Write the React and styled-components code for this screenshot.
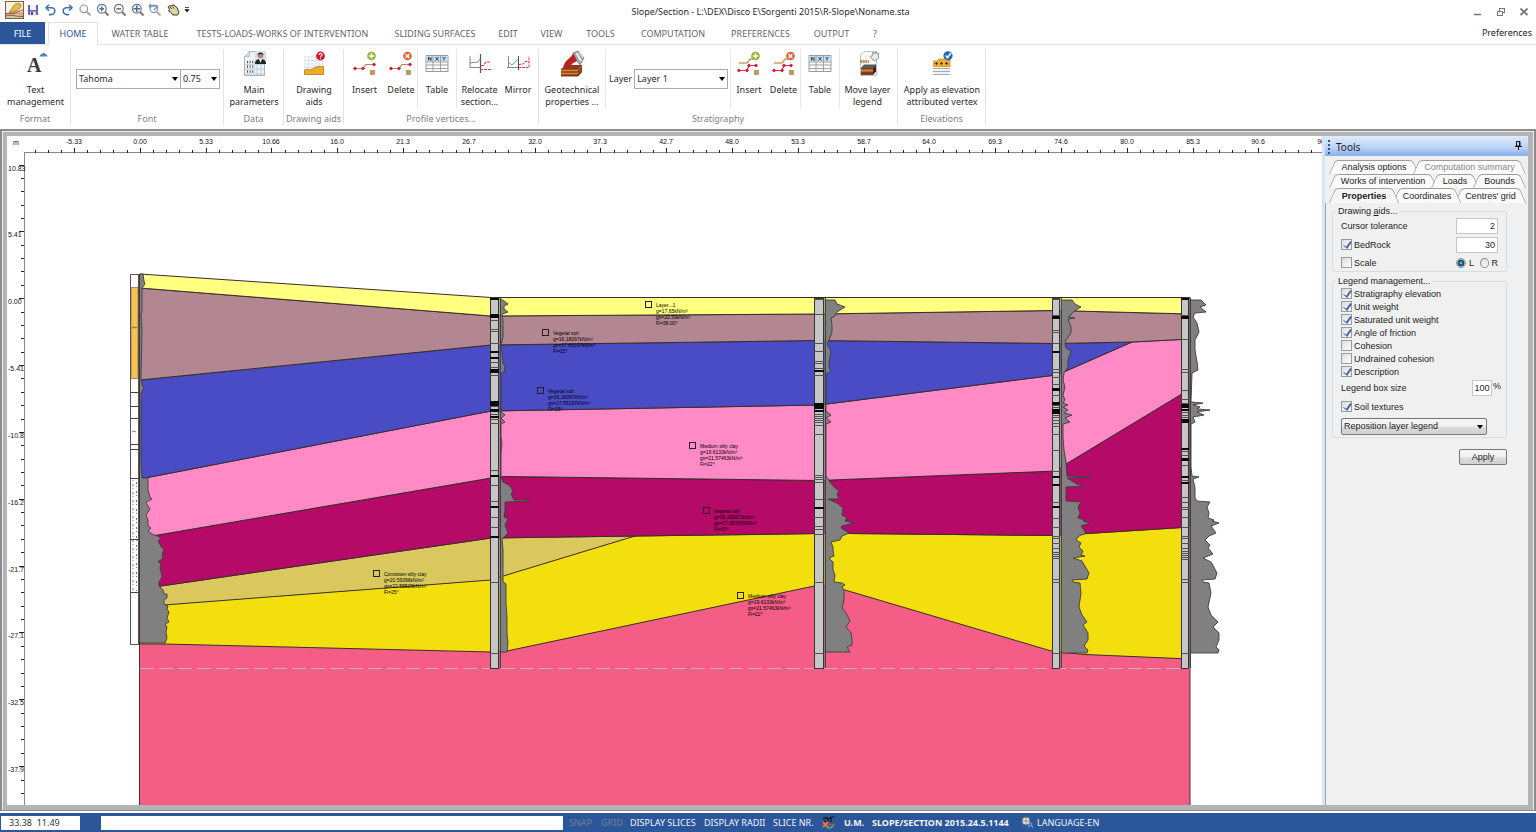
import React from 'react';
import styled, { createGlobalStyle, css } from 'styled-components';

const UI = '"Noto Sans", "Open Sans", sans-serif';
const DIALOG = '"Liberation Sans", sans-serif';

const GlobalStyle = createGlobalStyle`
  * { box-sizing: border-box; }
  html, body, #root { height: 100%; }
  body { margin: 0; background: #fff; font-family: ${UI}; font-size: 9px; color: #2b2b2b; overflow: hidden; }
  button, input, select { font: inherit; color: inherit; margin: 0; }
`;

const Shell = styled.div`
  display: flex;
  flex-direction: column;
  height: 100vh;
  min-height: 560px;
`;

/* ---------- title bar ---------- */
const TitleBar = styled.header`
  display: grid;
  grid-template-columns: 1fr auto 1fr;
  align-items: center;
  flex: none;
  height: 22px;
  padding-left: 5px;
`;
const QuickAccess = styled.div`
  display: flex;
  align-items: flex-start;
  height: 22px;
`;
const QuickButton = styled.button`
  flex: none;
  display: grid;
  place-items: center;
  width: ${p => p.$w || 18}px;
  height: 19px;
  padding: 0;
  border: 0;
  background: none;
`;
const Title = styled.h1`
  margin: 0;
  font-size: 9px;
  font-weight: 400;
  line-height: 22px;
  padding-top: 1px;
`;
const WindowButtons = styled.div`
  display: flex;
  justify-content: flex-end;
  padding-right: 1px;
`;
const WindowButton = styled(QuickButton)`
  width: 23px;
  height: 22px;
`;

/* ---------- tab strip ---------- */
const TabBar = styled.nav`
  display: flex;
  flex: none;
  height: 23px;
  border-bottom: 1px solid #e1e1e1;
`;
const FileTab = styled.button`
  width: 45px;
  height: 22px;
  margin-right: 3px;
  padding: 0;
  border: 0;
  background: #2b579a;
  color: #fff;
`;
const RibbonTab = styled.button`
  width: ${p => p.$w}px;
  height: 22px;
  padding: 0;
  border: 0;
  white-space: nowrap;
  background: #fff;
  color: #666;
  ${p => p.$active && css`
    height: 23px;
    border: 1px solid #e1e1e1;
    border-bottom: 0;
    padding-bottom: 2px;
    color: #2b579a;
  `}
`;
const PreferencesLink = styled.a`
  margin-left: auto;
  padding-right: 4px;
  line-height: 21px;
  color: #222;
  text-decoration: none;
`;

/* ---------- ribbon ---------- */
const Ribbon = styled.div`
  display: flex;
  flex: none;
  height: 84px;
  padding: 4px 0;
`;
const Group = styled.section`
  display: flex;
  flex-direction: column;
  flex: none;
  width: ${p => p.$w}px;
  border-right: 1px solid #e3e3e3;
`;
const GroupBody = styled.div`
  display: flex;
  flex: none;
  height: 59px;
  ${p => p.$center && css`justify-content: center; align-items: center;`}
`;
const GroupTitle = styled.div`
  padding-top: 4px;
  line-height: 13px;
  text-align: center;
  white-space: nowrap;
  color: #808080;
`;
const ToolButton = styled.button`
  display: flex;
  flex-direction: column;
  align-items: center;
  flex: none;
  width: ${p => p.$w}px;
  padding: 1px 0 0;
  border: 0;
  background: none;
  line-height: 12px;
  text-align: center;
  white-space: pre-line;
  svg { display: block; width: 28px; height: 28px; margin-bottom: 6px; }
`;
const Divider = styled.span`
  flex: none;
  width: 1px;
  background: #e6e6e6;
`;
const ComboWrap = styled.span`
  position: relative;
  display: block;
  flex: none;
  width: ${p => p.$w}px;
  height: 20px;
  &::after {
    content: '';
    position: absolute;
    right: 3px;
    top: 8px;
    border: 3px solid transparent;
    border-top: 4px solid #000;
    border-bottom: 0;
    pointer-events: none;
  }
`;
const Combo = styled.select`
  appearance: none;
  width: 100%;
  height: 100%;
  padding: 0 2px;
  border: 1px solid #ababab;
  border-radius: 0;
  background: #fff;
`;
const FontRow = styled.div`
  display: flex;
  padding-left: 2px;
  ${ComboWrap} + ${ComboWrap} { margin-left: -1px; }
`;
const LayerField = styled.label`
  display: flex;
  align-items: center;
  gap: 2px;
  width: 124px;
  padding-left: 3px;
  white-space: nowrap;
  flex: none;
`;

/* ---------- work area ---------- */
const Frame = styled.main`
  flex: 1;
  min-height: 0;
  display: flex;
  border: 2px solid #8c8c8c;
  border-bottom-width: 1px;
  margin-bottom: 2px;
`;
const FrameBevel = styled.div`
  flex: 1;
  min-width: 0;
  display: flex;
  padding: 4px 5px 5px 4px;
  border: 1px solid #ececec;
  border-bottom: 0;
  background: #b4b4b4;
`;
const Canvas = styled.div`
  flex: 1;
  min-width: 0;
  background: #fff;
  svg { display: block; width: 100%; height: 100%; }
`;

/* ---------- tools panel ---------- */
const Panel = styled.aside`
  flex: none;
  width: 206px;
  border-left: 3px solid #d5e4fa;
  background: #f0f0f0;
  font-family: ${DIALOG};
  color: #1c1c1c;
  display: flex;
  flex-direction: column;
`;
const PanelHeader = styled.div`
  display: flex;
  align-items: center;
  gap: 6px;
  height: 20px;
  padding: 2px 6px 0 3px;
  background: linear-gradient(#dfebfd, #b9d2f6 60%, #86aeea);
  font-family: ${UI};
  font-size: 10px;
  svg { margin: 0 0 3px auto; }
`;
const Grip = styled.span`
  height: 14px;
  border-left: 2px dotted #2f5596;
`;
const TabRow = styled.div`
  display: flex;
  height: ${p => p.$h || 14}px;
  padding: 0 5px 0 7px;
`;
const PanelTab = styled.button`
  position: relative;
  z-index: ${p => p.$z || 0};
  isolation: isolate;
  flex: ${p => (p.$w ? 'none' : '1')};
  width: ${p => p.$w}px;
  padding: 0;
  border: 0;
  background: none;
  line-height: 14px;
  text-align: center;
  white-space: nowrap;
  font-weight: ${p => (p.$active ? 700 : 400)};
  color: ${p => (p.$muted ? '#8a8a8a' : 'inherit')};
  &::before, &::after {
    content: '';
    position: absolute;
    z-index: -1;
    top: 0;
    bottom: 0;
    width: 51%;
    background: ${p => (p.$active ? '#f6f6f6' : '#fafafa')};
    border-top: 1px solid #9c9c9c;
  }
  &::before { left: 0; transform: skewX(-24deg); border-left: 1px solid #9c9c9c; border-radius: 4px 0 0 0; }
  &::after { right: 0; transform: skewX(24deg); border-right: 1px solid #9c9c9c; border-radius: 0 4px 0 0; }
`;
const PanelTop = styled.div`
  padding-top: 4px;
`;
const PanelBody = styled.div`
  flex: 1;
  padding: 2px 21px 0 6px;
  border-left: 1px solid #a0a0a0;
`;
const Box = styled.fieldset`
  min-width: 0;
  margin: 0 0 ${p => p.$gap || 0}px;
  padding: 0 8px;
  border: 1px solid #d3dfe6;
  border-radius: 2px;
  legend { margin-left: -4px; padding: 0 1px; line-height: 12px; }
`;
const Row = styled.div`
  display: flex;
  align-items: center;
  height: ${p => p.$h}px;
`;
const Spacer = styled.span`flex: 1;`;
const CheckLabel = styled.label`
  display: flex;
  align-items: center;
  gap: 2px;
`;
const Check = styled.input`
  appearance: none;
  position: relative;
  width: 11px;
  height: 11px;
  border: 1px solid #9a9b9b;
  background: linear-gradient(135deg, #dcdcdc, #fff);
  &:checked::after {
    content: '';
    position: absolute;
    left: 3px;
    top: 0;
    width: 3px;
    height: 7px;
    border: solid #4a66a8;
    border-width: 0 2px 1px 0;
    transform: rotate(35deg);
  }
`;
const Radio = styled.input`
  appearance: none;
  width: 10px;
  height: 10px;
  border: 1px solid #8e8f8f;
  border-radius: 50%;
  background: linear-gradient(135deg, #d8d8d8, #fff);
  &:checked { background: radial-gradient(circle, #4fb3e8 0 1px, #17486f 2px 3px, #eee 4px); }
`;
const RadioLabel = styled.label`
  display: flex;
  align-items: center;
  gap: 3px;
  width: ${p => p.$w}px;
`;
const NumberBox = styled.input`
  flex: none;
  width: ${p => p.$w}px;
  height: 16px;
  padding: 0 ${p => (p.$tight ? 0 : 2)}px;
  border: 1px solid #c3c7cd;
  background: #fff;
  text-align: ${p => (p.$tight ? 'center' : 'right')};
`;
const Percent = styled.span`
  width: 6px;
  padding: 0 0 4px 1px;
`;
const DropWrap = styled(ComboWrap)`
  height: 17px;
  &::after { right: 4px; top: 7px; }
`;
const DropButton = styled(Combo)`
  border-color: #777;
  border-radius: 2px;
  background: linear-gradient(#f3f3f3 45%, #dcdcdc 55%, #cfcfcf);
`;
const ApplyButton = styled.button`
  display: block;
  width: 48px;
  height: 16px;
  margin: 11px 0 0 auto;
  padding: 0;
  border: 1px solid #777;
  border-radius: 2px;
  background: linear-gradient(#f3f3f3 45%, #dedede 55%, #cfcfcf);
`;

/* ---------- status bar ---------- */
const StatusBar = styled.footer`
  display: flex;
  align-items: center;
  flex: none;
  height: 19px;
  padding-left: 1px;
  background: #2b579a;
  color: #fff;
`;
const Coordinates = styled.output`
  flex: none;
  width: 79px;
  height: 14px;
  margin-right: 21px;
  padding-left: 8px;
  line-height: 14px;
  background: #fff;
  color: #333;
`;
const CommandLine = styled.input`
  flex: none;
  width: 462px;
  height: 14px;
  margin-right: 6px;
  padding: 0 4px;
  border: 0;
  background: #fff;
  color: #333;
`;
const StatusButton = styled.button`
  flex: none;
  display: flex;
  align-items: center;
  gap: 3px;
  width: ${p => p.$w}px;
  padding: 0;
  border: 0;
  background: none;
  white-space: nowrap;
  color: ${p => (p.$off ? '#748094' : '#f2f5fa')};
  font-weight: ${p => (p.$bold ? 700 : 400)};
`;

/* ---------- icons ---------- */
const IconLetter = styled.text`
  font: 700 20px "Liberation Serif", serif;
  fill: #3c3c3c;
`;
const AppIcon = () => (
  <svg width="19" height="18" viewBox="0 0 19 18">
    <rect x=".5" y=".5" width="18" height="17" fill="#f7efe0" stroke="#8a5a3c" />
    <path d="M1 13C6 11 10 10 18 11V17H1Z" fill="#dba58f" />
    <path d="M1 14.500C7 12 12 14 18 15V17H1Z" fill="#c6d0a8" />
    <path d="M4 11C7 10 7 5 10.500 3.200C14 2 17 3 16 5.500C14 9 8 12 4 11Z" fill="#f0bb3d" stroke="#7e8a3a" strokeWidth=".9" />
    <path d="M1 12.500H8C12 12 14 9 18 9M1 15C7 13 11 16 18 15.500" fill="none" stroke="#8d4a3a" strokeWidth=".9" />
  </svg>
);
const SaveIcon = () => (
  <svg width="12" height="12" viewBox="0 0 12 12">
    <path d="M1 1H11V11H2L1 10Z" fill="#6a63b8" />
    <rect x="3" y="1" width="6" height="5" fill="#f3f3fa" />
    <rect x="3" y="7.500" width="6" height="4" fill="#d9d9e8" />
    <rect x="4" y="8" width="2" height="3" fill="#4c468f" />
  </svg>
);
const UndoIcon = ({ flip }) => (
  <svg width="13" height="12" viewBox="0 0 13 12">
    <g transform={flip ? 'translate(13 0) scale(-1 1)' : undefined} fill="none" stroke="#3f74b5" strokeWidth="1.600">
      <path d="M5 .8L2 3.800L5 6.800" />
      <path d="M2 3.800H7.500C12 3.800 12 10.200 7 10.600H5" />
    </g>
  </svg>
);
const Lens = ({ faint, children }) => (
  <svg width="14" height="14" viewBox="0 0 14 14" fill="none">
    <path d="M8.800 8.800L12.500 12.500" stroke={faint ? '#aaa' : '#777'} strokeWidth="2" />
    <circle cx="5.800" cy="5.800" r={faint ? 3.800 : 4.400} fill="#f7f9fc" stroke={faint ? '#999' : '#777'} strokeWidth="1.200" />
    {children}
  </svg>
);
const HandIcon = () => (
  <svg width="13" height="12" viewBox="0 0 13 12">
    <path d="M1 3L3 1.500L4 2L6 .8L8 2L10 3.500L11 6L12 8L10.500 11H6L3 7.500L1.500 7L2.500 5.500Z" fill="#e0d49c" stroke="#222" strokeWidth=".9" />
    <path d="M3 3L5 5M5.500 2.500L7 4.500" stroke="#222" strokeWidth=".8" />
  </svg>
);
const MinimizeIcon = () => (<svg width="10" height="10"><path d="M1 7.500H8" stroke="#777" strokeWidth="1.500" /></svg>);
const RestoreIcon = () => (
  <svg width="10" height="10" fill="#fff" stroke="#777">
    <rect x="3.500" y="1.500" width="5" height="4" /><rect x="1.500" y="4.500" width="5" height="4" />
  </svg>
);
const CloseIcon = () => (<svg width="10" height="10"><path d="M1.500 1.500L8.500 8M8.500 1.500L1.500 8" stroke="#777" strokeWidth="1.800" /></svg>);

const TextIcon = () => (
  <svg viewBox="0 0 28 28">
    <path d="M17.500 6.500Q18.500 3.500 20 4Q21.500 1.500 23 4Q25 3.500 25.500 6.500Z" fill="#4a80d0" />
    <IconLetter x="5" y="22">A</IconLetter>
  </svg>
);
const ParametersIcon = () => (
  <svg viewBox="0 0 28 28">
    <path d="M4.500 6.500L9.500 1.500H24.500V25.500H4.500Z" fill="#f1f2f4" stroke="#a9b0b8" />
    <path d="M4.500 6.500H9.500V1.500Z" fill="#dfe3e8" stroke="#a9b0b8" strokeWidth=".7" />
    <path d="M7 12H15M7 16.500H15M7 21.500H15" stroke="#555" strokeWidth="2.600" strokeDasharray="1 1.600" />
    <path d="M5 14.300H24M5 19H24M5 24H24M17 15V25M21 15V25" stroke="#b0cbdc" strokeWidth=".9" />
    <rect x="15" y="1" width="11" height="13" fill="#cfe0f0" />
    <path d="M15 14C15 10.500 17 9 20.500 9C24 9 26 10.500 26 14Z" fill="#222" />
    <path d="M19 9L20.500 13L22 9Z" fill="#e7f4ff" />
    <circle cx="20.500" cy="5.500" r="2.800" fill="#b98562" />
    <path d="M17.500 5C17.500 1.500 23.500 1.500 23.500 5C22 3.700 19 3.700 17.500 5Z" fill="#222" />
  </svg>
);
const DrawingAidsIcon = () => (
  <svg viewBox="0 0 28 28">
    <path d="M5 6H22V24H5Z" fill="#fff" />
    <path d="M5 6V24M8.500 6V24M12 6V24M15.500 6V24M19 6V24M22.500 10V18M5 7H18M5 10.500H23M5 14H23M5 17.500H23" stroke="#c8dcec" strokeWidth=".8" />
    <path d="M4.500 24.500V20C8 18.500 11 21 14 18C16 16 19 16.500 23.500 16.500V24.500Z" fill="#f0a92c" stroke="#b07a1c" strokeWidth=".8" />
    <circle cx="20.500" cy="6" r="4.400" fill="#d4142c" />
    <path d="M19 5C19 2.800 22 2.800 22 4.700C22 6 20.500 5.800 20.500 7.200M20.500 8V9.200" stroke="#fff" strokeWidth="1.200" fill="none" />
  </svg>
);
const VertexIcon = ({ remove, layer }) => (
  <svg viewBox="0 0 28 28">
    {layer && <path d="M4 13H12L15 9H18" fill="none" stroke="#c9a05d" strokeWidth="1.500" />}
    <path d={layer ? 'M4 20.500H12L14 15.500H21' : 'M4 18.500H12L15 14.500H23'} fill="none" stroke={layer ? '#d33' : '#c48048'} strokeWidth="1.200" />
    <g fill="#e01030">
      {(layer ? [[4, 20.500], [12, 20.500], [14, 15.500], [21, 15.500]] : [[4, 18.500], [12, 18.500], [23, 14.500]]).map(([x, y]) => (
        <path key={x} d={`M${x - 2} ${y}L${x} ${y - 2}L${x + 2} ${y}L${x} ${y + 2}Z`} />
      ))}
    </g>
    <rect x="19" y="20" width="5" height="5" fill="#c19a66" />
    <circle cx="20.500" cy="6" r="4.300" fill={remove ? '#ea5b2e' : '#8fb42c'} />
    <path d={remove ? 'M18.500 4L22.500 8M22.500 4L18.500 8' : 'M20.500 3.200V8.800M17.700 6H23.300'} stroke="#fff" strokeWidth="1.500" />
  </svg>
);
const TableIcon = () => (
  <svg viewBox="0 0 28 28">
    <path d="M3 5.500H25V21.500H3Z" fill="#fafafa" stroke="#9b9b9b" />
    <rect x="3.500" y="6" width="21" height="5.500" fill="#c3dced" />
    <path d="M3 12H25M3 15H25M3 18.500H25M10 5V21M17.500 5V21" stroke="#9b9b9b" strokeWidth=".9" />
    <path d="M5.500 10.500V7L8 10.500V7M12.500 7L15.500 10.500M15.500 7L12.500 10.500M19.500 7L21 8.800L22.500 7M21 8.800V10.500" stroke="#333" strokeWidth=".9" fill="none" />
  </svg>
);
const RelocateIcon = () => (
  <svg viewBox="0 0 28 28" fill="none">
    <path d="M4 6V18M4 17.500H15M4 13L12 12L14 9" stroke="#888" />
    <path d="M14.500 4V23" stroke="#555" strokeWidth="1.200" />
    <path d="M14 19.500H25M15 15.500H17.500L20 12H25" stroke="#df3048" strokeWidth="1.100" strokeDasharray="3 1" />
  </svg>
);
const MirrorIcon = () => (
  <svg viewBox="0 0 28 28" fill="none">
    <path d="M4.500 6V18M3 17.500H14M4 12L8 15L14 9.500" stroke="#888" />
    <path d="M14.500 6V20" stroke="#555" />
    <path d="M15 17.500H25V6M15 14.500L19 14L21 11.500H25" stroke="#df3048" strokeDasharray="2.500 1" />
  </svg>
);
const GeotechIcon = () => (
  <svg viewBox="0 0 28 28">
    <path d="M3 19L8 15H24L20 19Z" fill="#8a3a22" />
    <path d="M3 19H20V26.500H3Z" fill="#7c3a1c" />
    <path d="M3 20.500H20M3 23.500H20" stroke="#ee8a2f" strokeWidth="1.600" />
    <path d="M20 19L24 15V22L20 26.500Z" fill="#55260f" />
    <path d="M20 20.500L24 16.500M20 23.500L24 19.500" stroke="#b55f22" strokeWidth="1.200" />
    <path d="M15 3L20 1L26 8L22 15L19 11Z" fill="#a6a6a6" stroke="#707070" strokeWidth=".7" />
    <path d="M18.500 3L23 11" stroke="#ececec" strokeWidth="2" />
    <path d="M21 2.500L25 8" stroke="#d5d5d5" strokeWidth="1.200" />
    <path d="M15 3C14 8 7 9 5 17.500H13C13 13 16 13 19 11Z" fill="#bb2020" />
  </svg>
);
const LegendIcon = () => (
  <svg viewBox="0 0 28 28">
    <path d="M6.500 5L10 1.500H22.500V25.500H6.500Z" fill="#f6f6f6" stroke="#c3c3c3" />
    <path d="M6 11.500H15" stroke="#b98a68" strokeWidth="3" strokeDasharray="2 .7" />
    <path d="M16 6.500L18.500 5.500L19 2L20.500 4L22 1.500L23 3.500L24.500 3V7.500C24 10 21 11 19 10Z" fill="#e8e8e8" stroke="#8a8a8a" strokeWidth=".9" />
    <path d="M7 18L10 14.500H22L19 18Z" fill="#5a5a5a" />
    <path d="M7 18H19V25H7Z" fill="#704028" />
    <path d="M7 20.500H19" stroke="#ee7a24" strokeWidth="2.200" />
    <path d="M19 18L22 14.500V21.500L19 25Z" fill="#3f241a" />
  </svg>
);
const ElevationIcon = () => (
  <svg viewBox="0 0 28 28">
    <path d="M5.500 11H9L11 9H22V16.500H5.500Z" fill="#f3ab2c" stroke="#c98c25" strokeWidth=".7" />
    <path d="M7 13.500H10M12 13.500H15M17 13.500H20M8.500 12V15M13.500 12V15M18.500 12V15" stroke="#333" strokeWidth=".9" />
    <rect x="5" y="17" width="17" height="7.500" fill="#f4f4f4" />
    <path d="M5 18.500H22M5 21.500H22M5 24.500H22" stroke="#a8a8a8" />
    <circle cx="20" cy="5.800" r="4.600" fill="#1c6cb8" />
    <path d="M17.800 5.500L19.500 7.800L23 3" stroke="#fff" strokeWidth="1.500" fill="none" />
  </svg>
);
const PinIcon = () => (
  <svg width="7" height="9" viewBox="0 0 7 9">
    <path d="M1.500 .5H5V5H1.500ZM0 5.500H7M3.500 5V9" stroke="#111" fill="none" /><path d="M4.500 .5V5" stroke="#111" />
  </svg>
);
const SliceIcon = () => (
  <svg width="13" height="13" viewBox="0 0 13 13" fill="none">
    <path d="M1 3L4 1.500L6 3L9 1L12 1M3 4V7M6 2V6M9 2V6" stroke="#111" strokeWidth="1.200" />
    <path d="M1 6L6 11M6 6L1 11" stroke="#ff6a3c" strokeWidth="2" />
    <path d="M5 12C9 12.500 11 11 12 8" stroke="#4fb85b" strokeWidth="1.500" />
    <path d="M7 8.500H12" stroke="#e23a3a" strokeWidth="1.500" />
  </svg>
);
const GlobeIcon = () => (
  <svg width="13" height="13" viewBox="0 0 13 13" fill="none">
    <circle cx="5" cy="5" r="4" fill="#e6e6dc" stroke="#777" />
    <path d="M1 5H9M5 1V9" stroke="#777" strokeWidth=".8" />
    <path d="M7 12L9.500 6L12 12M8 10H11" stroke="#6fa0dc" />
  </svg>
);

/* ---------- section drawing ---------- */
const LAYERS = [
  { fill: '#f4df0e', d: 'M140 590L491 560L635 536L760 534.500L819 533.500L850 533.500L1056 535.500L1087 533.500L1190 527V659L1085 654.500L1053 651.500L845 590L819 585L507 651L491 652L164 644H140Z' },
  { fill: '#dac85e', d: 'M140 589L491 538L635 536L500 577L491 580L164 605L140 607Z' },
  { fill: '#b50a68', d: 'M140 538L491 478L505 476.500L819 480.500L1056 471L1066 464L1190 389V527L1087 533.500L1056 535.500L850 533.500L819 533.500L635 536L491 538L161 586L140 589Z' },
  { fill: '#ff8ac5', d: 'M140 479L491 411L819 405L1056 375L1066 371L1132 342L1190 339V389L1066 464L1056 471L819 480.500L505 476.500L491 478L152 536L140 538Z' },
  { fill: '#4a4cc6', d: 'M140 380L491 345L819 340.500L1056 343.500L1132 342L1066 371L1056 375L819 405L491 411L140 479Z' },
  { fill: '#b38792', d: 'M140 288L491 316L819 314L1056 310.500L1190 314V339L1132 342L1056 343.500L819 340.500L491 345L140 380Z' },
  { fill: '#ffff80', d: 'M140 274L491 297.500H1190V314L1056 310.500L819 314L491 316L140 288Z' },
];

// penetration logs: distance from the borehole axis at each elevation
const LOGS = [
  { x: 140, p: [3, 274, 4, 281, 5, 284, 2, 288, 2, 312, 1, 313, 2, 330, 1, 378, 2, 385, 4, 388, 1, 393, 1, 460, 2, 478, 8, 478, 8, 490, 10, 497, 12, 499, 8, 501, 6, 503, 10, 509, 6, 515, 8, 520, 8, 526, 11, 528, 8, 531, 12, 534, 17, 536, 21, 538, 18, 541, 22, 548, 24, 549, 22, 555, 23, 558, 18, 562, 21, 563, 20, 568, 22, 577, 19, 582, 19, 586, 23, 590, 24, 594, 27, 594, 27, 598, 24, 600, 24, 604, 28, 606, 27, 609, 29, 612, 27, 618, 29, 622, 25, 624, 27, 627, 26, 632, 27, 638, 25, 643] },
  { x: 500, p: [1, 299, 4, 301, 8, 304, 4, 306, 4, 309, 8, 312, 2, 314, 3, 320, 3, 337, 1, 345, 2, 353, 3, 363, 5, 367, 4, 370, 6, 371, 1, 373, 1, 403, 2, 406, 1, 412, 5, 415, 1, 418, 5, 422, 1, 424, 1, 437, 2, 443, 1, 453, 1, 477, 3, 482, 10, 486, 13, 491, 11, 494, 14, 500, 29, 500, 29, 501, 5, 502, 5, 510, 4, 517, 8, 519, 5, 525, 8, 533, 2, 539, 3, 550, 3, 573, 3, 582, 6, 584, 6, 603, 7, 617, 7, 633, 8, 643, 7, 652] },
  { x: 825, p: [10, 300, 12, 304, 20, 307, 12, 312, 10, 316, 6, 318, 7, 325, 7, 332, 4, 340, 2, 344, 4, 348, 6, 352, 4, 362, 4, 368, 6, 371, 1, 374, 1, 411, 6, 415, 1, 418, 6, 422, 1, 424, 1, 476, 5, 482, 9, 487, 14, 491, 12, 494, 14, 499, 3, 499, 12, 503, 18, 508, 17, 515, 22, 518, 20, 521, 29, 523, 17, 526, 16, 528, 24, 533, 17, 536, 15, 540, 6, 542, 8, 547, 8, 550, 9, 556, 4, 558, 8, 562, 8, 570, 10, 575, 9, 582, 17, 583, 20, 585, 17, 587, 19, 590, 19, 600, 17, 608, 21, 613, 25, 621, 21, 627, 26, 633, 27, 640, 27, 645, 22, 647, 25, 652] },
  { x: 1062, p: [10, 300, 13, 304, 19, 307, 11, 312, 9, 315, 6, 317, 13, 318, 6, 319, 9, 327, 9, 333, 4, 340, 3, 344, 4, 348, 9, 351, 6, 360, 6, 367, 2, 373, 1, 380, 3, 387, 1, 395, 3, 400, 1, 403, 6, 405, 1, 407, 6, 410, 2, 413, 10, 415, 3, 418, 8, 422, 1, 424, 1, 437, 2, 450, 4, 462, 5, 476, 29, 477, 5, 478, 15, 484, 22, 486, 4, 487, 4, 501, 19, 502, 16, 507, 18, 513, 16, 518, 23, 520, 21, 521, 28, 523, 19, 526, 24, 533, 17, 536, 14, 540, 19, 543, 17, 547, 21, 551, 19, 555, 23, 556, 11, 558, 20, 561, 27, 573, 25, 579, 10, 580, 11, 582, 18, 583, 19, 593, 17, 607, 20, 615, 25, 622, 21, 625, 26, 633, 26, 640, 22, 646, 26, 650, 25, 653] },
  { x: 1191, p: [10, 300, 15, 305, 9, 307, 15, 312, 4, 313, 2, 317, 6, 323, 8, 332, 4, 340, 4, 350, 6, 362, 7, 370, 1, 373, 0, 402, 12, 403, 2, 405, 9, 407, 6, 409, 19, 410, 6, 412, 13, 415, 2, 417, 4, 422, 0, 424, 0, 467, 1, 476, 8, 477, 2, 479, 4, 488, 4, 498, 6, 501, 19, 502, 16, 507, 18, 513, 17, 518, 23, 520, 21, 521, 28, 523, 20, 526, 25, 533, 18, 536, 14, 540, 19, 545, 17, 548, 22, 554, 12, 558, 20, 562, 26, 573, 24, 579, 11, 580, 12, 582, 18, 583, 20, 593, 17, 607, 20, 615, 27, 622, 22, 627, 28, 633, 28, 640, 25, 647, 28, 650, 27, 653] },
];
const logPath = ({ x, p }) => {
  let d = `M${x} ${p[1]}`;
  for (let i = 0; i < p.length; i += 2) d += `L${x + p[i]} ${p[i + 1]}`;
  return `${d}H${x}`;
};

const HOLES = [
  { x: 490, w: 9, m: [[299, 2], [316, 4], [320], [329], [331], [343], [352, 2], [358, 2], [362], [367], [370, 2], [372, 2], [375], [403, 5], [406], [410, 3], [414], [417, 2], [419], [423], [470], [476, 2], [485], [501], [507, 2], [517], [527], [537, 2], [582], [653]] },
  { x: 814, w: 10, m: [[299], [314], [343], [351], [361], [363], [368], [371, 2], [375], [406, 6], [411, 2], [414], [416], [418], [420], [422], [425], [434], [475], [477], [479], [482], [499], [508, 2], [517], [526], [529], [534], [582], [653]] },
  { x: 1052, w: 8, m: [[299], [315], [317, 3], [330], [332], [343], [352, 2], [369], [372], [377], [384], [389, 3], [395], [403, 3], [405], [407], [411, 5], [415], [417], [420], [423], [426], [434], [450], [471], [477, 2], [485, 2], [502], [507, 2], [518], [527], [536], [538], [543], [548], [552], [554], [556], [558], [579], [582], [653]] },
  { x: 1181, w: 8, m: [[299, 2], [315], [317, 3], [339], [369], [372], [390], [399], [403], [406, 4], [410, 2], [412], [415], [417], [421, 4], [449, 2], [451], [455], [459, 3], [465], [477, 2], [480], [483, 2], [497], [502], [507], [509], [517], [527], [536], [538], [543], [548], [551], [553], [555], [557], [559], [579], [582], [653]] },
];

const VEGETAL = ['Vegetal soil', 'g=16.18097kN/m³', 'gs=17.65197kN/m³', 'Fi=15°'];
const MEDIUM = ['Medium silty clay', 'g=19.6133kN/m³', 'gs=21.57463kN/m³', 'Fi=22°'];
const NOTES = [
  { x: 648, y: 305, t: ['Layer...1', 'g=17.65kN/m³', 'gs=20.59kN/m³', 'Fi=38.00°'] },
  { x: 545, y: 333, t: VEGETAL },
  { x: 540, y: 391, t: VEGETAL },
  { x: 692, y: 446, t: MEDIUM },
  { x: 706, y: 511, t: VEGETAL },
  { x: 376, y: 574, t: ['Consisten silty clay', 'g=20.59396kN/m³', 'gs=22.55529kN/m³', 'Fi=25°'] },
  { x: 740, y: 596, t: MEDIUM },
];

const X_LABELS = ['-5.33', '0.00', '5.33', '10.66', '16.0', '21.3', '26.7', '32.0', '37.3', '42.7', '48.0', '53.3', '58.7', '64.0', '69.3', '74.6', '80.0', '85.3', '90.6', '96.0'];
const Y_LABELS = ['10.83', '5.41', '0.00', '-5.41', '-10.8', '-16.2', '-21.7', '-27.1', '-32.5', '-37.9'];
const xTicks = Array.from({ length: 99 }, (_, i) => 34.500 + i * 13.160);
const yTicks = Array.from({ length: 48 }, (_, i) => 164.500 + i * 13.370);

const RulerText = styled.text`
  font: 7px ${DIALOG};
  fill: #111;
`;
const NoteText = styled.text`
  font: 5px ${DIALOG};
  fill: #000;
`;

const Section = () => (
  <svg role="img" aria-label="Slope section">
    <g transform="translate(-7 -136)">
      <rect x="139.500" y="640" width="1050.500" height="1600" fill="#f35d86" />
      <path d="M140 590L1190 520V700H140Z" fill="#f35d86" />
      {LAYERS.map(l => <path key={l.fill} d={l.d} fill={l.fill} stroke="#3a2c2c" strokeWidth="1" />)}
      <path d="M139.500 274V2240M1190 298V2240" stroke="#4a3038" fill="none" />
      <path d="M140 668.500H1190" stroke="#c3b4bb" strokeDasharray="14 5" />
      {LOGS.map(l => <path key={l.x} d={logPath(l)} fill="#808080" stroke="#3c3c3c" strokeWidth=".9" />)}
      <rect x="130.500" y="274.500" width="8" height="370" fill="#fff" stroke="#555" />
      <rect x="131" y="287.500" width="7" height="91" fill="#f8c351" stroke="#555" strokeWidth=".6" />
      <path d="M130 392.500H138M130 406.500H138M130 418.500H138M130 444.500H138M130 449.500H138M130 478.500H138M130 539.500H138M130 592.500H138" stroke="#444" />
      <path d="M132 328L134 327L136 328L137 327M132 432L134 431L136 432" stroke="#555" fill="none" strokeWidth=".8" />
      <path d="M133 480V591" stroke="#777" strokeDasharray="1 3 2 2" /><path d="M136.500 482V591" stroke="#777" strokeDasharray="2 2 1 4" />
      {HOLES.map(h => (
        <g key={h.x}>
          <rect x={h.x + h.w} y="298" width="2" height="370" fill="#777" opacity=".6" />
          <path d={`M${h.x + h.w + 1.500} 298V668`} stroke="#333" strokeWidth=".8" />
          <rect x={h.x + 0.500} y="298.500" width={h.w - 1} height="370" fill="#c6c6c6" stroke="#333" />
          {h.m.map(([y, t = 1]) => <rect key={y} x={h.x} y={y - Math.floor(t / 2)} width={h.w} height={t} fill={t > 1 ? '#0a0a0a' : '#505050'} />)}
        </g>
      ))}
      {NOTES.map(n => (
        <g key={`${n.x}-${n.y}`}>
          <rect x={n.x - 2.500} y={n.y - 3.500} width="6" height="6" fill="none" stroke="#222" />
          {n.t.map((line, i) => <NoteText key={line} x={n.x + 8} y={n.y + 2 + i * 6}>{line}</NoteText>)}
        </g>
      ))}
      <path d="M24 152.500H3000M24.500 152V2240" stroke="#888" />
      <path d={xTicks.map((x, i) => `M${Math.round(x) + 0.500} ${i % 5 === 3 ? 148 : 150}V153`).join('')} stroke="#222" />
      <path d={yTicks.map((y, i) => `M${i % 5 === 0 ? 19 : 21} ${Math.round(y) + 0.500}H24`).join('')} stroke="#222" />
      <RulerText x="13" y="145">m</RulerText>
      {X_LABELS.map((t, i) => <RulerText key={t} x={Math.round(74 + i * 65.800)} y="144" textAnchor="middle">{t}</RulerText>)}
      {Y_LABELS.map((t, i) => <RulerText key={t} x="8" y={Math.round(170.500 + i * 66.850)}>{t}</RulerText>)}
    </g>
  </svg>
);

/* ---------- composition ---------- */
const Tool = ({ icon: Icon, label, w, ...rest }) => (
  <ToolButton type="button" $w={w}><Icon {...rest} /><span>{label}</span></ToolButton>
);
const CheckRow = ({ label, h = 13, on = false }) => (
  <Row $h={h}><CheckLabel><Check type="checkbox" defaultChecked={on} />{label}</CheckLabel></Row>
);

const TABS = [['HOME', 50], ['WATER TABLE', 84], ['TESTS-LOADS-WORKS OF INTERVENTION', 201], ['SLIDING SURFACES', 104], ['EDIT', 42], ['VIEW', 45], ['TOOLS', 53], ['COMPUTATION', 92], ['PREFERENCES', 83], ['OUTPUT', 59], ['?', 28]];

const LEGEND_CHECKS = [['Stratigraphy elevation', true], ['Unit weight', true], ['Saturated unit weight', true], ['Angle of friction', true], ['Cohesion', false], ['Undrained cohesion', false], ['Description', true]];

export default function App() {
  return (
    <Shell>
      <GlobalStyle />
      <TitleBar>
        <QuickAccess>
          <QuickButton $w={19} aria-label="Application"><AppIcon /></QuickButton>
          <QuickButton $w={17} aria-label="Save"><SaveIcon /></QuickButton>
          <QuickButton aria-label="Undo"><UndoIcon /></QuickButton>
          <QuickButton $w={17} aria-label="Redo"><UndoIcon flip /></QuickButton>
          <QuickButton aria-label="Zoom"><Lens faint /></QuickButton>
          <QuickButton $w={17} aria-label="Zoom in"><Lens><path d="M3.500 5.800H8M5.800 3.500V8" stroke="#3d6fb3" strokeWidth="1.500" /></Lens></QuickButton>
          <QuickButton aria-label="Zoom out"><Lens><path d="M3.500 5.800H8" stroke="#3d6fb3" strokeWidth="1.500" /></Lens></QuickButton>
          <QuickButton $w={17} aria-label="Zoom all"><Lens><path d="M2.500 5.800H9M5.800 2.500V9" stroke="#3d6fb3" strokeWidth="1.500" /></Lens></QuickButton>
          <QuickButton aria-label="Zoom previous"><Lens faint><path d="M1 3H10M1 3L3 1M1 3L3 5M6 7L10 3" stroke="#6a93c9" strokeWidth="1.400" /></Lens></QuickButton>
          <QuickButton aria-label="Pan"><HandIcon /></QuickButton>
          <QuickButton $w={10} aria-label="Customize"><svg width="6" height="6"><path d="M1 .5H5M1 2.500H5L3 5Z" stroke="#222" strokeWidth=".8" fill="#222" /></svg></QuickButton>
        </QuickAccess>
        <Title>Slope/Section - L:\DEX\Disco E\Sorgenti 2015\R-Slope\Noname.sta</Title>
        <WindowButtons>
          <WindowButton aria-label="Minimize"><MinimizeIcon /></WindowButton>
          <WindowButton aria-label="Restore"><RestoreIcon /></WindowButton>
          <WindowButton aria-label="Close"><CloseIcon /></WindowButton>
        </WindowButtons>
      </TitleBar>

      <TabBar>
        <FileTab>FILE</FileTab>
        {TABS.map(([t, w], i) => <RibbonTab key={t} $w={w} $active={i === 0}>{t}</RibbonTab>)}
        <PreferencesLink href="#preferences">Preferences</PreferencesLink>
      </TabBar>

      <Ribbon>
        <Group $w={71}>
          <GroupBody><Tool icon={TextIcon} w={71} label={'Text\nmanagement'} /></GroupBody>
          <GroupTitle>Format</GroupTitle>
        </Group>
        <Group $w={153}>
          <GroupBody $center>
            <FontRow>
              <ComboWrap $w={105}><Combo aria-label="Font name"><option>Tahoma</option></Combo></ComboWrap>
              <ComboWrap $w={40}><Combo aria-label="Font size"><option>0.75</option></Combo></ComboWrap>
            </FontRow>
          </GroupBody>
          <GroupTitle>Font</GroupTitle>
        </Group>
        <Group $w={60}>
          <GroupBody><Tool icon={ParametersIcon} w={60} label={'Main\nparameters'} /></GroupBody>
          <GroupTitle>Data</GroupTitle>
        </Group>
        <Group $w={60}>
          <GroupBody><Tool icon={DrawingAidsIcon} w={60} label={'Drawing\naids'} /></GroupBody>
          <GroupTitle>Drawing aids</GroupTitle>
        </Group>
        <Group $w={195}>
          <GroupBody>
            <Tool icon={VertexIcon} w={41} label="Insert" />
            <Tool icon={VertexIcon} remove w={32} label="Delete" />
            <Divider />
            <Tool icon={TableIcon} w={38} label="Table" />
            <Divider />
            <Tool icon={RelocateIcon} w={45} label={'Relocate\nsection...'} />
            <Tool icon={MirrorIcon} w={32} label="Mirror" />
          </GroupBody>
          <GroupTitle>Profile vertices...</GroupTitle>
        </Group>
        <Group $w={359}>
          <GroupBody>
            <Tool icon={GeotechIcon} w={66} label={'Geotechnical\nproperties ...'} />
            <Divider />
            <LayerField>Layer<ComboWrap $w={94}><Combo><option>Layer 1</option></Combo></ComboWrap></LayerField>
            <Divider />
            <Tool icon={VertexIcon} layer w={36} label="Insert" />
            <Tool icon={VertexIcon} layer remove w={33} label="Delete" />
            <Divider />
            <Tool icon={TableIcon} w={38} label="Table" />
            <Divider />
            <Tool icon={LegendIcon} w={55} label={'Move layer\nlegend'} />
          </GroupBody>
          <GroupTitle>Stratigraphy</GroupTitle>
        </Group>
        <Group $w={88}>
          <GroupBody><Tool icon={ElevationIcon} w={88} label={'Apply as elevation\nattributed vertex'} /></GroupBody>
          <GroupTitle>Elevations</GroupTitle>
        </Group>
      </Ribbon>

      <Frame>
        <FrameBevel>
          <Canvas><Section /></Canvas>
          <Panel>
            <PanelHeader><Grip />Tools<PinIcon /></PanelHeader>
            <PanelTop>
              <TabRow>
                <PanelTab $w={84}>Analysis options</PanelTab>
                <PanelTab $muted>Computation summary</PanelTab>
              </TabRow>
              <TabRow>
                <PanelTab $w={102}>Works of intervention</PanelTab>
                <PanelTab $w={42}>Loads</PanelTab>
                <PanelTab>Bounds</PanelTab>
              </TabRow>
              <TabRow $h={15}>
                <PanelTab $w={64} $z={2} $active>Properties</PanelTab>
                <PanelTab $w={62} $z={1}>Coordinates</PanelTab>
                <PanelTab>Centres' grid</PanelTab>
              </TabRow>
            </PanelTop>
            <PanelBody>
              <Box $gap={3}>
                <legend>Drawing <u>a</u>ids...</legend>
                <Row $h={18}>
                  <label htmlFor="tolerance">Cursor tolerance</label><Spacer />
                  <NumberBox id="tolerance" $w={42} defaultValue="2" />
                </Row>
                <Row $h={19}>
                  <CheckLabel><Check type="checkbox" defaultChecked />BedRock</CheckLabel><Spacer />
                  <NumberBox aria-label="BedRock depth" $w={42} defaultValue="30" />
                </Row>
                <Row $h={17}>
                  <CheckLabel><Check type="checkbox" />Scale</CheckLabel><Spacer />
                  <RadioLabel $w={24}><Radio type="radio" name="side" defaultChecked />L</RadioLabel>
                  <RadioLabel $w={18}><Radio type="radio" name="side" />R</RadioLabel>
                </Row>
              </Box>
              <Box>
                <legend>Legend management...</legend>
                {LEGEND_CHECKS.map(([t, on]) => <CheckRow key={t} label={t} on={on} />)}
                <Row $h={20}>
                  <label htmlFor="boxsize">Legend box size</label><Spacer />
                  <NumberBox id="boxsize" $w={20} $tight defaultValue="100" /><Percent>%</Percent>
                </Row>
                <CheckRow label="Soil textures" h={17} on />
                <Row $h={22}>
                  <DropWrap $w={146}><DropButton aria-label="Legend action"><option>Reposition layer legend</option></DropButton></DropWrap>
                </Row>
              </Box>
              <ApplyButton>Apply</ApplyButton>
            </PanelBody>
          </Panel>
        </FrameBevel>
      </Frame>

      <StatusBar>
        <Coordinates>33.38&nbsp; 11.49</Coordinates>
        <CommandLine aria-label="Command" />
        <StatusButton $w={32} $off>SNAP</StatusButton>
        <StatusButton $w={29} $off>GRID</StatusButton>
        <StatusButton $w={74}>DISPLAY SLICES</StatusButton>
        <StatusButton $w={69}>DISPLAY RADII</StatusButton>
        <StatusButton $w={49}>SLICE NR.</StatusButton>
        <StatusButton $w={22} aria-label="Slices"><SliceIcon /></StatusButton>
        <StatusButton $w={28} $bold>U.M.</StatusButton>
        <StatusButton $w={149} $bold>SLOPE/SECTION 2015.24.5.1144</StatusButton>
        <StatusButton $w={90}><GlobeIcon />LANGUAGE-EN</StatusButton>
      </StatusBar>
    </Shell>
  );
}
